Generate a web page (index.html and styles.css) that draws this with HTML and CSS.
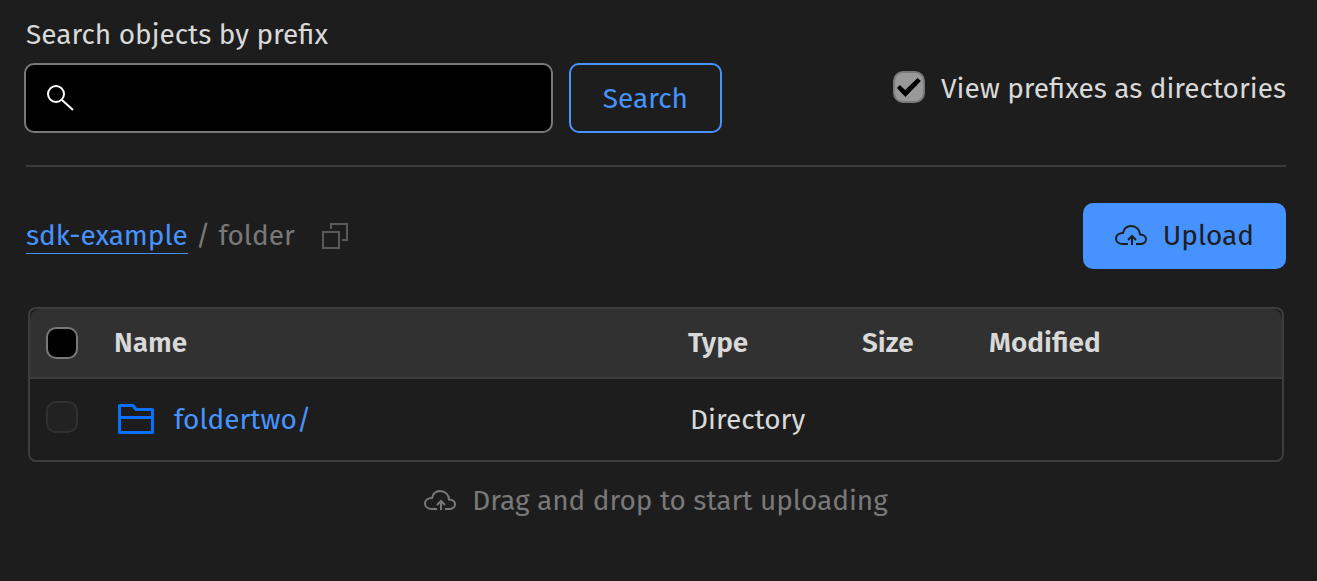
FILE: index.html
```html
<!DOCTYPE html>
<html lang="en">
<head>
    <meta charset="UTF-8">
    <meta name="viewport" content="width=device-width, initial-scale=1.0">
    <title>Object Browser</title>
    <link rel="stylesheet" href="styles.css">
</head>
<body>
    <!-- Shared icon shapes -->
    <svg class="sprite" aria-hidden="true">
        <symbol id="icon-upload" viewBox="0 0 32 22">
            <path d="M13 19H8C4 19 1 17 1 13.500C1 10 4 8 8 8C9 3.500 12 1 16 1C21 1 25 4.500 25 9.500C28.500 9.500 31 11.500 31 14.200C31 17 28.500 19 25 19H21M17 20V11M13 15L17 11L21 15" />
        </symbol>
    </svg>

    <main class="container">
        <div class="toolbar">
            <form class="search" onsubmit="event.preventDefault()">
                <label for="prefix">Search objects by prefix</label>
                <div class="search-row">
                    <div class="search-box">
                        <svg class="search-icon" viewBox="0 0 28 26" aria-hidden="true">
                            <circle cx="10" cy="9" r="8" />
                            <path d="M16 15L27 25" />
                        </svg>
                        <input type="text" id="prefix">
                    </div>
                    <button type="submit" class="btn btn-outline">Search</button>
                </div>
            </form>
            <label class="view-toggle">
                <input type="checkbox" checked>
                <span>View prefixes as directories</span>
            </label>
        </div>

        <div class="path-bar">
            <nav class="breadcrumb" aria-label="Breadcrumb">
                <a href="#">sdk-example</a>
                <span>/</span>
                <span>folder</span>
                <button type="button" class="copy-btn" aria-label="Copy path">
                    <svg viewBox="0 0 26 26" aria-hidden="true">
                        <path d="M1 9H17V25H1ZM9 6V1H25V17H20" />
                    </svg>
                </button>
            </nav>
            <button type="button" class="btn btn-primary">
                <svg class="upload-icon" aria-hidden="true"><use href="#icon-upload" /></svg>
                Upload
            </button>
        </div>

        <table class="objects">
            <colgroup>
                <col class="col-check">
                <col>
                <col class="col-type">
                <col class="col-size">
                <col class="col-modified">
            </colgroup>
            <thead>
                <tr>
                    <th><input type="checkbox" aria-label="Select all"></th>
                    <th>Name</th>
                    <th>Type</th>
                    <th>Size</th>
                    <th>Modified</th>
                </tr>
            </thead>
            <tbody>
                <tr>
                    <td><input type="checkbox" aria-label="Select foldertwo/" disabled></td>
                    <td>
                        <a href="#" class="folder-link">
                            <svg class="folder-icon" viewBox="0 0 36 30" aria-hidden="true">
                                <path d="M1.500 1.500H15L18 5.500H34.500V28.500H1.500ZM1.500 13.500H34.500" />
                            </svg>
                            foldertwo/
                        </a>
                    </td>
                    <td>Directory</td>
                    <td></td>
                    <td></td>
                </tr>
            </tbody>
        </table>

        <p class="drop-hint">
            <svg class="upload-icon" aria-hidden="true"><use href="#icon-upload" /></svg>
            Drag and drop to start uploading
        </p>
    </main>
</body>
</html>
```
FILE: styles.css
```css
:root {
    --bg: #1d1d1d;
    --bg-header: #313131;
    --text: #d9d9d9;
    --text-muted: #797979;
    --border: #3d3d3d;
    --border-control: #797979;
    --accent: #4693ff;
    --folder: #086fff;
}

* {
    box-sizing: border-box;
}

body {
    margin: 0;
    background-color: var(--bg);
    color: var(--text);
    font-family: "Fira Sans", "Noto Sans", sans-serif;
    font-size: 28px;
    line-height: 40px;
}

.sprite {
    position: absolute;
    width: 0;
    height: 0;
}

svg {
    fill: none;
    stroke: currentColor;
    stroke-width: 2;
    flex-shrink: 0;
}

a {
    color: var(--accent);
    text-decoration: none;
}

input,
button {
    font: inherit;
    margin: 0;
}

.container {
    padding: 15px 31px 32px 26px;
}

.toolbar {
    display: flex;
    justify-content: space-between;
    align-items: center;
    padding-bottom: 32px;
    border-bottom: 2px solid var(--border);
}

.search {
    flex: 0 1 696px;
}

.search > label {
    display: block;
    margin-bottom: 8px;
}

.search-row {
    display: flex;
    gap: 16px;
    margin-left: -2px;
}

.search-box {
    display: flex;
    align-items: center;
    flex: 1;
    min-width: 0;
    padding: 0 20px;
    gap: 16px;
    background-color: #000;
    border: 2px solid var(--border-control);
    border-radius: 10px;
}

.search-box input {
    flex: 1;
    min-width: 0;
    border: none;
    outline: none;
    background: none;
    color: var(--text);
}

.search-icon {
    width: 28px;
    height: 26px;
    color: #fff;
}

.btn {
    display: flex;
    align-items: center;
    gap: 16px;
    padding: 13px 32px;
    border-radius: 10px;
    cursor: pointer;
}

.btn-outline {
    padding: 14px 32px 12px;
    border: 2px solid var(--accent);
    background: none;
    color: var(--accent);
}

.btn-primary {
    border: none;
    background-color: var(--accent);
    color: var(--bg);
}

.upload-icon {
    width: 32px;
    height: 22px;
}

input[type="checkbox"] {
    appearance: none;
    display: block;
    flex-shrink: 0;
    width: 32px;
    height: 32px;
    border: 2px solid var(--border-control);
    border-radius: 10px;
    background-color: #000;
}

input[type="checkbox"]:checked {
    display: grid;
    place-items: center;
    background-color: #999;
}

input[type="checkbox"]:checked::before {
    content: "";
    width: 24px;
    height: 20px;
    background-color: #000;
    clip-path: polygon(0 55%, 12% 40%, 34% 65%, 86% 5%, 100% 20%, 35% 100%);
}

input[type="checkbox"]:disabled {
    border-color: #313131;
    background-color: #222;
}

.view-toggle {
    display: flex;
    align-items: center;
    gap: 16px;
    padding-top: 26px;
}

.view-toggle span {
    padding-top: 4px;
}

.path-bar {
    display: flex;
    justify-content: space-between;
    align-items: center;
    margin: 36px 0 38px;
}

.breadcrumb {
    display: flex;
    align-items: center;
    gap: 8px;
    color: var(--text-muted);
}

.breadcrumb a {
    line-height: 34px;
    border-bottom: 1px solid var(--accent);
}

.copy-btn {
    margin-left: 19px;
    padding: 0;
    border: none;
    background: none;
    color: #595959;
    cursor: pointer;
}

.copy-btn svg {
    display: block;
    width: 26px;
    height: 26px;
}

.objects {
    width: calc(100% - 4px);
    margin: 0 2px;
    table-layout: fixed;
    border: 2px solid var(--border);
    border-spacing: 0;
    border-radius: 8px;
}

.objects th,
.objects td {
    padding: 14px 16px;
    text-align: left;
}

.objects th {
    background-color: var(--bg-header);
    border-bottom: 2px solid var(--border);
    font-weight: 600;
}

.objects th:first-child {
    border-top-left-radius: 10px;
}

.objects th:last-child {
    border-top-right-radius: 10px;
}

.objects td {
    padding: 21px 18px 20px;
}

.objects td:first-child {
    padding: 22px 16px;
    vertical-align: top;
}

.col-check {
    width: 68px;
}

.col-type {
    width: 174px;
}

.col-size {
    width: 127px;
}

.col-modified {
    width: 309px;
}

.folder-link {
    display: flex;
    align-items: center;
    gap: 20px;
    padding-left: 2px;
}

.folder-icon {
    width: 36px;
    height: 30px;
    margin-bottom: 2px;
    stroke-width: 3;
    stroke-linejoin: round;
    color: var(--folder);
}

.drop-hint {
    display: flex;
    justify-content: center;
    align-items: center;
    gap: 16px;
    margin: 19px 0 0;
    color: var(--text-muted);
}
```
